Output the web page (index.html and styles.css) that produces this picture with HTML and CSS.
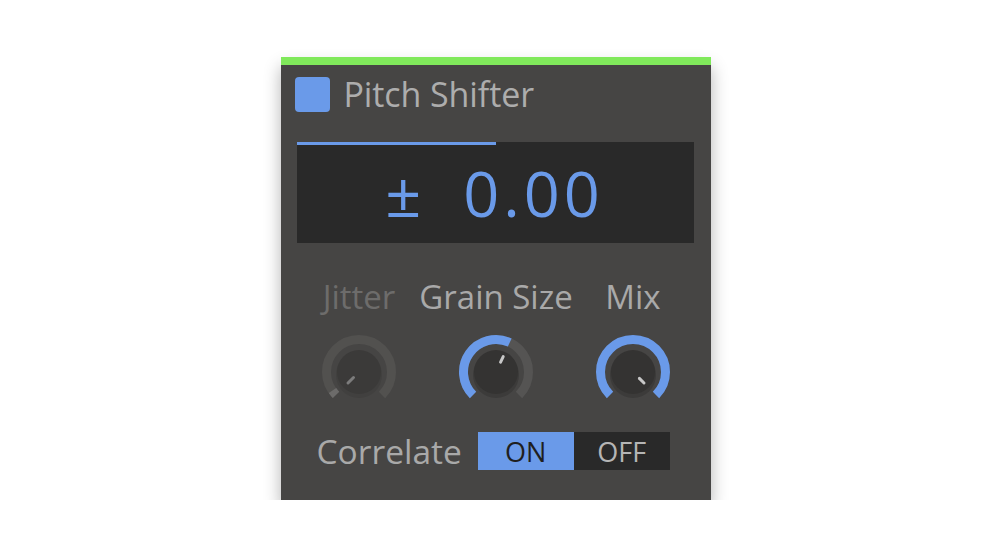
FILE: index.html
```html
<!DOCTYPE html>
<html>
<head>
<meta charset="utf-8">
<link rel="stylesheet" href="styles.css">
</head>
<body>
<div class="panel">
  <div class="header">
    <div class="icon"></div>
    <div class="title">Pitch Shifter</div>
  </div>
  <div class="display">
    <div class="progress"></div>
    <div class="value"><span class="pm">±</span><span class="num">0.00</span></div>
  </div>
  <div class="knobs">
    <div class="knob-col disabled">
      <div class="label">Jitter</div>
      <svg class="knob" width="80" height="80" viewBox="0 0 80 80">
        <path d="M17.02 62.98 A32.5 32.5 0 1 1 62.98 62.98" class="track"/>
        <path d="M17.02 62.98 A32.5 32.5 0 0 1 13.5 58.6" class="val-dim"/>
        <circle cx="40" cy="43" r="23" class="shadow"/>
        <circle cx="40" cy="40" r="22" class="body"/>
        <line x1="34.5" y1="45.5" x2="29" y2="51" class="ptr"/>
      </svg>
    </div>
    <div class="knob-col">
      <div class="label">Grain Size</div>
      <svg class="knob" width="80" height="80" viewBox="0 0 80 80">
        <path d="M17.02 62.98 A32.5 32.5 0 1 1 62.98 62.98" class="track"/>
        <path d="M17.02 62.98 A32.5 32.5 0 0 1 53.73 10.54" class="val"/>
        <circle cx="40" cy="43" r="23" class="shadow"/>
        <circle cx="40" cy="40" r="22" class="body"/>
        <line x1="44.6" y1="30.1" x2="47.2" y2="24.6" class="ptr"/>
      </svg>
    </div>
    <div class="knob-col">
      <div class="label">Mix</div>
      <svg class="knob" width="80" height="80" viewBox="0 0 80 80">
        <path d="M17.02 62.98 A32.5 32.5 0 1 1 62.98 62.98" class="val"/>
        <circle cx="40" cy="43" r="23" class="shadow"/>
        <circle cx="40" cy="40" r="22" class="body"/>
        <line x1="46.4" y1="46.4" x2="51" y2="51" class="ptr"/>
      </svg>
    </div>
  </div>
  <div class="toggle-row">
    <div class="toggle-label">Correlate</div>
    <div class="toggle">
      <div class="seg on">ON</div>
      <div class="seg off">OFF</div>
    </div>
  </div>
</div>
</body>
</html>
```

FILE: styles.css
```css
html, body {
  margin: 0;
  padding: 0;
  background: #ffffff;
}
body {
  font-family: "Open Sans", "Noto Sans", sans-serif;
  padding-top: 57px;
}
.panel {
  width: 430px;
  height: 435px;
  margin: 0 auto;
  box-sizing: content-box;
  background: #464544;
  border-top: 8px solid #80e95b;
  box-shadow: 0 10px 16px rgba(0, 0, 0, 0.3);
  display: flex;
  flex-direction: column;
}
.header {
  display: flex;
  align-items: center;
  padding: 12px 0 0 14px;
  height: 35px;
}
.icon {
  width: 35px;
  height: 35px;
  border-radius: 4px;
  background: #6a9ae9;
  flex: none;
}
.title {
  margin-left: 14px;
  font-size: 34px;
  color: #adadad;
  line-height: 35px;
  letter-spacing: -0.1px;
}
.display {
  margin: 30px 0 0 16px;
  width: 397px;
  height: 101px;
  background: #292929;
  position: relative;
  display: flex;
  align-items: center;
  justify-content: center;
}
.progress {
  position: absolute;
  left: 0;
  top: 0;
  width: 199px;
  height: 3px;
  background: #6a9ae9;
}
.value {
  color: #6a9ae9;
  font-size: 63px;
  line-height: 1;
  display: flex;
  align-items: baseline;
  margin-left: -1px;
}
.pm {
  margin-right: 42px;
}
.num {
  letter-spacing: 4px;
}
.knobs {
  display: flex;
  justify-content: center;
  margin-top: 36px;
  padding-left: 1px;
}
.knob-col {
  width: 137px;
  display: flex;
  flex-direction: column;
  align-items: center;
}
.label {
  font-size: 33px;
  color: #a9a9a9;
  line-height: 36px;
  white-space: nowrap;
}
.knob {
  margin-top: 17px;
  display: block;
}
.track {
  fill: none;
  stroke: #555453;
  stroke-width: 9;
}
.val {
  fill: none;
  stroke: #6a9ae9;
  stroke-width: 9;
}
.val-dim {
  fill: none;
  stroke: #6c6b6a;
  stroke-width: 9;
}
.shadow {
  fill: #3c3b3a;
}
.body {
  fill: #343332;
}
.ptr {
  stroke: #c8c8c8;
  stroke-width: 3;
  stroke-linecap: round;
}
.disabled .label {
  color: #6d6c6b;
}
.disabled .track {
  stroke: #52514f;
}
.disabled .shadow {
  fill: #41403f;
}
.disabled .body {
  fill: #3b3a39;
}
.disabled .ptr {
  stroke: #7c7c7c;
}
.toggle-row {
  display: flex;
  align-items: center;
  margin-top: 20px;
  padding-left: 36px;
}
.toggle-label {
  font-size: 33.5px;
  color: #a9a9a9;
  line-height: 38px;
}
.toggle {
  display: flex;
  margin-left: 16px;
  height: 38px;
}
.seg {
  width: 96px;
  display: flex;
  align-items: center;
  justify-content: center;
  font-size: 27px;
}
.on {
  background: #6a9ae9;
  color: #1f1f1f;
}
.off {
  background: #292929;
  color: #b5b5b5;
}
```
